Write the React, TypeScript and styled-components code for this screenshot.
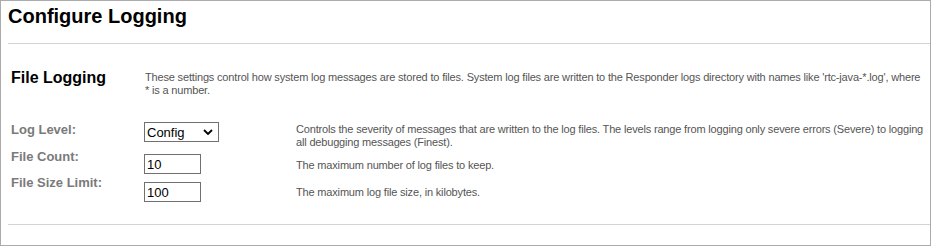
import React from 'react';
import styled, { createGlobalStyle } from 'styled-components';

const GlobalStyle = createGlobalStyle`
  html, body {
    margin: 0;
    padding: 0;
    background: #ffffff;
  }
  body {
    font-family: "Liberation Sans", Arial, sans-serif;
  }
`;

const Frame = styled.div`
  border: 1px solid #ababab;
  background: #ffffff;
  padding: 4px 0 0 7px;
  box-sizing: content-box;
  display: flex;
  flex-direction: column;
  width: 922px;
  height: 240px;
`;

const Title = styled.h1`
  margin: 0;
  font-size: 20px;
  line-height: 23px;
  font-weight: bold;
  color: #000;
`;

const Rule = styled.div<{ $top: number }>`
  height: 1px;
  flex-shrink: 0;
  background: #d3d3d3;
  margin-top: ${(p) => p.$top}px;
`;

const SectionHead = styled.div`
  display: grid;
  grid-template-columns: 134px 1fr;
  margin-top: 25px;
  padding-left: 3px;
`;

const SectionTitle = styled.h2`
  margin: 0;
  font-size: 16px;
  line-height: 18px;
  font-weight: bold;
  color: #000;
`;

const SmallText = styled.div`
  font-size: 11px;
  line-height: 13px;
  letter-spacing: -0.17px;
  color: #555;
  padding-right: 4px;
`;

const SectionDesc = styled(SmallText)`
  margin-top: 2px;
`;

const Fields = styled.div`
  display: flex;
  flex-direction: column;
  margin-top: 25px;
  padding-left: 3px;
`;

const Row = styled.div<{ $height: number }>`
  display: grid;
  grid-template-columns: 133px 152px 1fr;
  height: ${(p) => p.$height}px;
  align-items: start;
`;

const Label = styled.label`
  font-size: 13px;
  line-height: 15px;
  font-weight: bold;
  color: #7a7a7a;
`;

const Control = styled.div<{ $offset: number }>`
  padding-top: ${(p) => p.$offset}px;
`;

const Help = styled(SmallText)<{ $offset: number }>`
  padding-top: ${(p) => p.$offset}px;
`;

const SelectWrap = styled.div`
  position: relative;
  width: 75px;
  height: 20px;
`;

const Select = styled.select`
  appearance: none;
  -webkit-appearance: none;
  width: 75px;
  height: 20px;
  box-sizing: border-box;
  border: 1px solid #707070;
  border-radius: 0;
  background: #fff;
  padding: 0 0 0 2px;
  font-family: "Liberation Sans", Arial, sans-serif;
  font-size: 13px;
  color: #000;
  outline: none;
`;

const Chevron = styled.svg`
  position: absolute;
  right: 6px;
  top: 7px;
  pointer-events: none;
`;

const Input = styled.input`
  width: 57px;
  height: 20px;
  box-sizing: border-box;
  border: 1px solid #707070;
  border-radius: 0;
  padding: 0 0 0 2px;
  font-family: "Liberation Sans", Arial, sans-serif;
  font-size: 13px;
  color: #000;
  outline: none;
`;

export default function App() {
  return (
    <>
      <GlobalStyle />
      <Frame>
        <Title>Configure Logging</Title>
        <Rule $top={15} />
        <SectionHead>
          <SectionTitle>File Logging</SectionTitle>
          <SectionDesc>
            These settings control how system log messages are stored to files. System log files are written to the
            Responder logs directory with names like 'rtc-java-*.log', where * is a number.
          </SectionDesc>
        </SectionHead>
        <Fields>
          <Row $height={27}>
            <Label>Log Level:</Label>
            <Control $offset={0}>
              <SelectWrap>
                <Select defaultValue="Config">
                  <option>Severe</option>
                  <option>Warning</option>
                  <option>Info</option>
                  <option>Config</option>
                  <option>Fine</option>
                  <option>Finer</option>
                  <option>Finest</option>
                </Select>
                <Chevron width="10" height="6" viewBox="0 0 10 6">
                  <path d="M1 1 L5 5 L9 1" fill="none" stroke="#000" strokeWidth="1.8" />
                </Chevron>
              </SelectWrap>
            </Control>
            <Help $offset={1}>
              Controls the severity of messages that are written to the log files. The levels range from logging only
              severe errors (Severe) to logging all debugging messages (Finest).
            </Help>
          </Row>
          <Row $height={26}>
            <Label>File Count:</Label>
            <Control $offset={5}>
              <Input defaultValue="10" />
            </Control>
            <Help $offset={10}>The maximum number of log files to keep.</Help>
          </Row>
          <Row $height={30}>
            <Label>File Size Limit:</Label>
            <Control $offset={7}>
              <Input defaultValue="100" />
            </Control>
            <Help $offset={11}>The maximum log file size, in kilobytes.</Help>
          </Row>
        </Fields>
        <Rule $top={19} />
      </Frame>
    </>
  );
}
